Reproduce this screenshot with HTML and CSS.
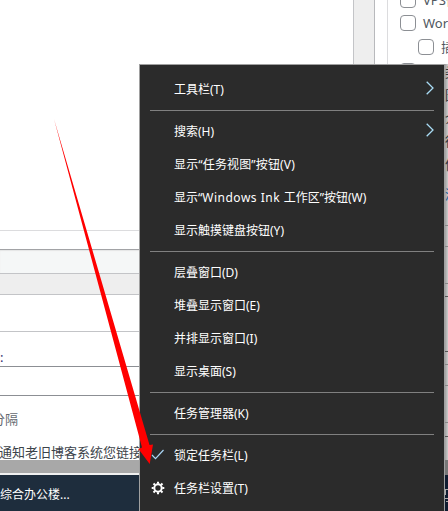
FILE: index.html
```html
<!DOCTYPE html>
<html lang="zh-CN">
<head>
<meta charset="utf-8">
<title>任务栏菜单</title>
<link rel="stylesheet" href="styles.css">
</head>
<body>
<div class="screen">
  <div class="top">
    <div class="editor"></div>
    <div class="gutter"></div>
    <div class="side">
      <div class="options">
        <div class="option"><span class="box"></span>VPS使用</div>
        <div class="option"><span class="box"></span>WordPress</div>
        <div class="option child"><span class="box"></span>插件</div>
        <div class="option"><span class="box"></span></div>
      </div>
    </div>
  </div>
  <div class="blank"></div>
  <div class="status"></div>
  <div class="band"></div>
  <div class="panel"></div>
  <div class="label">:</div>
  <div class="field"></div>
  <div class="notes">
    <div class="hint">分隔</div>
    <div class="desc">通知老旧博客系统您链接</div>
  </div>
  <div class="scroll"></div>
  <div class="taskbar">综合办公楼...</div>
</div>

<div class="edge">
  <span>类</span><span>圖</span><span>介</span><span>德</span><span>优</span><span class="link">添</span>
  <div class="edge-lines"></div>
  <div class="edge-foot"></div>
  <div class="edge-bar"></div>
</div>

<div class="menu">
  <div class="item">工具栏(T)<svg class="chevron" viewBox="0 0 8 14"><path d="M.7.7 7 7 .7 13.3"/></svg></div>
  <div class="separator"></div>
  <div class="item">搜索(H)<svg class="chevron" viewBox="0 0 8 14"><path d="M.7.7 7 7 .7 13.3"/></svg></div>
  <div class="item view">显示“任务视图”按钮(V)</div>
  <div class="item ink">显示“<span class="latin">Windows Ink </span>工作区”按钮(W)</div>
  <div class="item">显示触摸键盘按钮(Y)</div>
  <div class="separator"></div>
  <div class="item">层叠窗口(D)</div>
  <div class="item">堆叠显示窗口(E)</div>
  <div class="item">并排显示窗口(I)</div>
  <div class="item">显示桌面(S)</div>
  <div class="separator"></div>
  <div class="item">任务管理器(K)</div>
  <div class="separator"></div>
  <div class="item"><svg class="mark" viewBox="0 0 14 14"><path class="tick" d="M1 7 4.500 10.700 12.500 2"/></svg>锁定任务栏(L)</div>
  <div class="item"><svg class="mark" viewBox="0 0 14 14"><circle class="gear" cx="7" cy="7" r="3.7"/><path class="teeth" d="M7 .7v2M7 11.3v2M.7 7h2M11.3 7h2M2.5 2.5 4 4M10 10l1.500 1.500M2.500 11.500 4 10M10 4l1.500-1.500"/></svg>任务栏设置(T)</div>
</div>

<svg class="arrow" viewBox="0 0 448 511"><path d="M54 119 149.500 445 153 444.500 149.700 464 138.500 449 142 447.500Z"/></svg>
</body>
</html>
```
FILE: styles.css
```css
* { box-sizing: border-box; }
body {
  margin: 0;
  width: 448px;
  height: 511px;
  overflow: hidden;
  position: relative;
  font: 12px/16px "Noto Sans", "Noto Sans CJK SC", sans-serif;
  color: #50575e;
  background: #fff;
}
.screen { display: flex; flex-direction: column; height: 511px; }
.top { display: flex; height: 230px; }
.editor { flex: none; width: 354px; border-right: 1px solid #c3c4c7; }
.gutter { flex: none; width: 21px; background: #eee; border-right: 1px solid #b8b9bc; }
.side { flex: 1; min-width: 0; padding-left: 12px; }
.options {
  height: 100%;
  padding-left: 12px;
  border-left: 1px solid #dcdcde;
  overflow: hidden;
  white-space: nowrap;
  font-size: 13px;
}
.option { display: flex; align-items: center; gap: 7px; height: 24px; }
.option:first-child { margin-top: -12px; }
.option:nth-child(2) { margin-top: -1px; }
.child { padding-left: 18px; }
.box { flex: none; width: 16px; height: 16px; border: 1px solid #8c8f94; border-radius: 4px; background: #fff; }
.blank { height: 20px; border-top: 1px solid #dcdcde; border-bottom: 1px solid #a2a3a6; }
.status { height: 24px; background: #f5f7f7; border-bottom: 1px solid #c3c4c7; box-shadow: inset 0 1px 1px #e5e5e5; }
.band { height: 21px; background: #eee; border-bottom: 1px solid #c3c4c7; }
.panel { height: 37px; border-bottom: 1px solid #c3c4c7; }
.label { height: 35px; padding-top: 15px; border-bottom: 1px solid #8c8f94; color: #30306e; font-size: 13px; line-height: 20px; }
.field { height: 29px; border-bottom: 1px solid #8c8f94; }
.notes { height: 64px; padding-top: 14px; font-size: 13px; line-height: 18px; overflow: hidden; }
.hint { margin-left: -8px; color: #646970; }
.desc { margin-left: -1px; margin-top: 15px; white-space: nowrap; color: #3c434a; }
.scroll { height: 15px; background: #a8a8a8; border-bottom: 2px solid #f0f0f0; }
.taskbar { flex: 1; padding-top: 12px; background: #1e2d3d; color: #fff; }
.menu {
  position: absolute;
  left: 139px;
  top: 64px;
  width: 306px;
  height: 447px;
  padding: 8px 10px;
  border: 1px solid #a0a0a0;
  border-bottom: 0;
  background: #2b2b2b;
  color: #fff;
}
.item { position: relative; display: flex; align-items: center; height: 33px; padding-left: 24px; white-space: pre; }
.view { letter-spacing: .15px; }
.latin { letter-spacing: .5px; }
.separator { height: 9px; padding-top: 4px; }
.separator::before { content: ""; display: block; height: 1px; background: #808080; }
.chevron { width: 8px; height: 14px; margin: -3px 0 0 auto; fill: none; stroke: #a9dcf5; stroke-width: 1.3; }
.mark { position: absolute; left: 1px; top: 9px; width: 14px; height: 14px; fill: none; stroke: #fff; }
.tick { stroke: #a9d5f5; stroke-width: 1.2; }
.gear { stroke-width: 2; }
.teeth { stroke-width: 2; }
.edge {
  position: absolute;
  left: 445px;
  top: 64px;
  width: 3px;
  height: 447px;
  display: flex;
  flex-direction: column;
  overflow: hidden;
  background: linear-gradient(90deg, #a0a0a0, #ccc);
  font-size: 13px;
}
.edge span { width: 13px; height: 23px; flex: none; color: #30363c; }
.edge .link { height: 36px; padding-top: 7px; color: #135e96; }
.edge-lines {
  flex: 1;
  background:
    linear-gradient(#888 0 0) 0 10px / 3px 1px no-repeat,
    linear-gradient(#888 0 0) 0 31px / 3px 1px no-repeat,
    linear-gradient(#888 0 0) 0 68px / 3px 1px no-repeat,
    linear-gradient(#555 0 0) 0 81px / 3px 1px no-repeat,
    linear-gradient(#555 0 0) 0 136px / 3px 1px no-repeat,
    linear-gradient(#888 0 0) 0 149px / 3px 1px no-repeat,
    linear-gradient(#888 0 0) 0 170px / 3px 1px no-repeat,
    linear-gradient(#888 0 0) 0 207px / 3px 1px no-repeat,
    linear-gradient(#555 0 0) 0 221px / 3px 1px no-repeat;
}
.edge-foot { height: 15px; background: #777; }
.edge-bar {
  height: 36px;
  background:
    linear-gradient(#aaa 0 0) 0 14px / 3px 1px no-repeat,
    linear-gradient(#aaa 0 0) 0 15px / 1px 5px no-repeat,
    linear-gradient(#aaa 0 0) 0 23px / 3px 1px no-repeat,
    linear-gradient(#aaa 0 0) 1px 26px / 2px 1px no-repeat,
    #101c30;
}
.arrow { position: absolute; left: 0; top: 0; width: 448px; height: 511px; fill: #f00; pointer-events: none; }
```
